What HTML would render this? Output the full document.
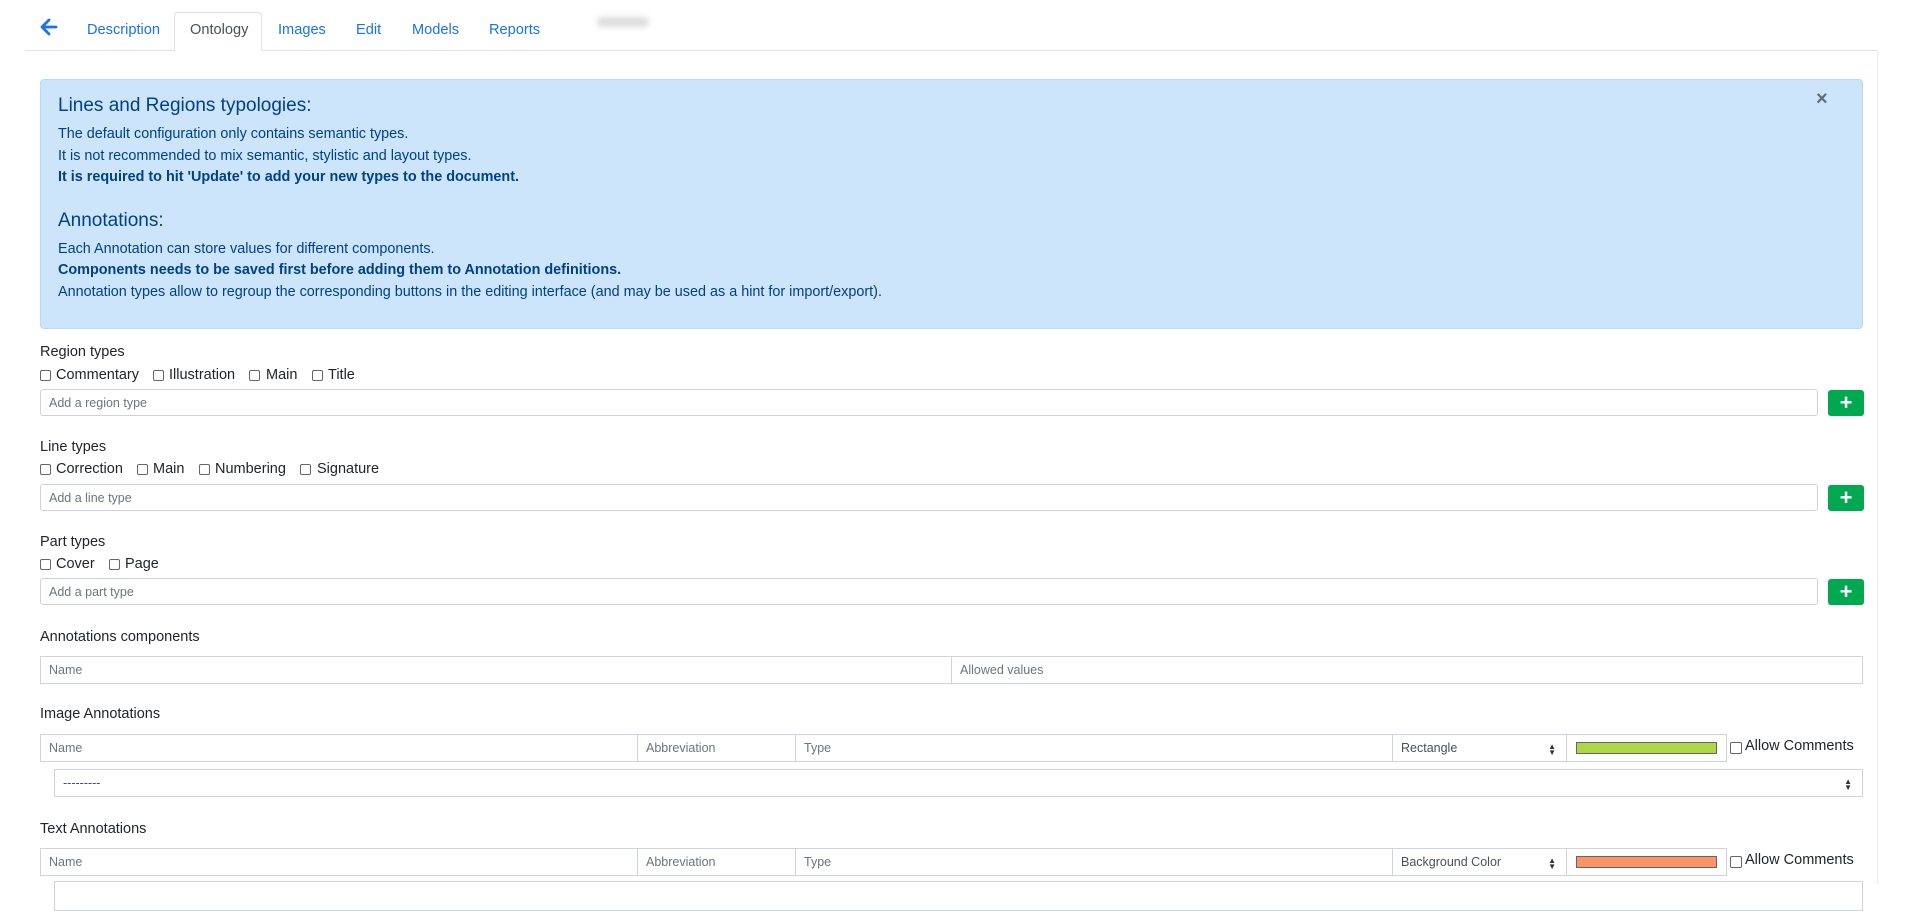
<!DOCTYPE html>
<html><head><meta charset="utf-8"><style>
*{box-sizing:border-box;margin:0;padding:0}
body{width:1905px;height:884px;overflow:hidden;background:#fff;font-family:"Liberation Sans",Arial,sans-serif;color:#212529;position:relative}
.a{position:absolute;white-space:nowrap}
.tab{position:absolute;top:22px;font-size:14.6px;color:#1a73e8}
.lbl{position:absolute;left:40px;font-size:14.5px;color:#212529}
.cb{position:absolute;width:11px;height:11px;border:1px solid #666;border-radius:2px;background:#fff}
.ct{position:absolute;font-size:14.5px}
.inp{position:absolute;left:40px;width:1778px;height:27px;border:1px solid #ced4da;border-radius:3px;font-size:12.5px;color:#6c757d;padding:6px 8px}
.plus{position:absolute;left:1828px;width:36px;height:26px;background:#00a94f;border-radius:3px;color:#fff;font-size:22px;font-weight:bold;text-align:center;line-height:26px}
.cell{position:absolute;height:28px;border:1px solid #ced4da;font-size:12.5px;color:#6c757d;padding:6px 8px;background:#fff}
.al p{font-size:14.4px;color:#004085;line-height:21.5px}
.ar{position:absolute;right:10px;font-size:8px;color:#333;line-height:6px;top:9px}
</style></head><body>
<svg class="a" style="left:40px;top:18px" width="18" height="18" viewBox="0 0 18 18"><path d="M16 9H3M9 2L2 9l7 7" stroke="#1a73e8" stroke-width="2.8" fill="none" stroke-linecap="round" stroke-linejoin="round"/></svg>
<div class="tab" style="left:87px">Description</div>
<div class="a" style="left:174px;top:12px;width:88px;height:39px;border:1px solid #dee2e6;border-bottom:1px solid #fff;border-radius:4px 4px 0 0;background:#fff;z-index:2"></div>
<div class="tab" style="left:190px;color:#495057;z-index:3">Ontology</div>
<div class="tab" style="left:278px">Images</div>
<div class="tab" style="left:356px">Edit</div>
<div class="tab" style="left:412px">Models</div>
<div class="tab" style="left:489px">Reports</div>
<div class="a" style="left:597px;top:17px;width:52px;height:10px;background:#ddd;border-radius:5px;filter:blur(3px)"></div>
<div class="a" style="left:25px;top:50px;width:1852px;height:1px;background:#dee2e6"></div>
<div class="a" style="left:1877px;top:50px;width:1px;height:834px;background:#eee"></div>

<div class="a al" style="left:40px;top:79px;width:1823px;height:250px;background:#cce5fb;border:1px solid #b8daff;border-radius:4px;padding:15px 17px">
<div style="font-size:19px;color:#004085;height:29px">Lines and Regions typologies:</div>
<p>The default configuration only contains semantic types.</p>
<p>It is not recommended to mix semantic, stylistic and layout types.</p>
<p><b>It is required to hit 'Update' to add your new types to the document.</b></p>
<div style="font-size:19px;color:#004085;margin-top:21px;height:29px">Annotations:</div>
<p>Each Annotation can store values for different components.</p>
<p><b>Components needs to be saved first before adding them to Annotation definitions.</b></p>
<p>Annotation types allow to regroup the corresponding buttons in the editing interface (and may be used as a hint for import/export).</p>
<div class="a" style="left:1775px;top:8px;font-size:20px;font-weight:bold;color:#5d6d7c">×</div>
</div>

<div class="lbl" style="top:344px">Region types</div>
<div class="cb" style="left:40px;top:370px"></div><div class="ct" style="left:56px;top:367px">Commentary</div>
<div class="cb" style="left:153px;top:370px"></div><div class="ct" style="left:169px;top:367px">Illustration</div>
<div class="cb" style="left:249px;top:370px"></div><div class="ct" style="left:266px;top:367px">Main</div>
<div class="cb" style="left:312px;top:370px"></div><div class="ct" style="left:328px;top:367px">Title</div>
<div class="inp" style="top:389px">Add a region type</div><div class="plus" style="top:390px">+</div>

<div class="lbl" style="top:439px">Line types</div>
<div class="cb" style="left:40px;top:464px"></div><div class="ct" style="left:56px;top:461px">Correction</div>
<div class="cb" style="left:137px;top:464px"></div><div class="ct" style="left:153px;top:461px">Main</div>
<div class="cb" style="left:199px;top:464px"></div><div class="ct" style="left:215px;top:461px">Numbering</div>
<div class="cb" style="left:300px;top:464px"></div><div class="ct" style="left:317px;top:461px">Signature</div>
<div class="inp" style="top:484px">Add a line type</div><div class="plus" style="top:485px">+</div>

<div class="lbl" style="top:534px">Part types</div>
<div class="cb" style="left:40px;top:559px"></div><div class="ct" style="left:56px;top:556px">Cover</div>
<div class="cb" style="left:109px;top:559px"></div><div class="ct" style="left:125px;top:556px">Page</div>
<div class="inp" style="top:578px">Add a part type</div><div class="plus" style="top:579px">+</div>

<div class="lbl" style="top:629px">Annotations components</div>
<div class="cell" style="left:40px;top:656px;width:912px">Name</div>
<div class="cell" style="left:951px;top:656px;width:912px">Allowed values</div>

<div class="lbl" style="top:706px">Image Annotations</div>
<div class="cell" style="left:40px;top:734px;width:598px">Name</div>
<div class="cell" style="left:637px;top:734px;width:159px">Abbreviation</div>
<div class="cell" style="left:795px;top:734px;width:598px">Type</div>
<div class="cell" style="left:1392px;top:734px;width:175px;color:#495057">Rectangle<span class="ar">▲<br>▼</span></div>
<div class="cell" style="left:1566px;top:734px;width:161px"><div class="a" style="left:9px;top:7px;width:141px;height:12px;background:#aed748;border:1px solid #666"></div></div>
<div class="cb" style="left:1730px;top:742px;width:12px;height:12px"></div><div class="ct" style="left:1745px;top:738px">Allow Comments</div>
<div class="cell" style="left:54px;top:769px;width:1809px;color:#495057">---------<span class="ar">▲<br>▼</span></div>

<div class="lbl" style="top:821px">Text Annotations</div>
<div class="cell" style="left:40px;top:848px;width:598px">Name</div>
<div class="cell" style="left:637px;top:848px;width:159px">Abbreviation</div>
<div class="cell" style="left:795px;top:848px;width:598px">Type</div>
<div class="cell" style="left:1392px;top:848px;width:175px;color:#495057">Background Color<span class="ar">▲<br>▼</span></div>
<div class="cell" style="left:1566px;top:848px;width:161px"><div class="a" style="left:9px;top:7px;width:141px;height:12px;background:#fa9365;border:1px solid #666"></div></div>
<div class="cb" style="left:1730px;top:856px;width:12px;height:12px"></div><div class="ct" style="left:1745px;top:852px">Allow Comments</div>
<div class="a" style="left:54px;top:881px;width:1809px;height:30px;border:1px solid #ced4da"></div>
</body></html>
